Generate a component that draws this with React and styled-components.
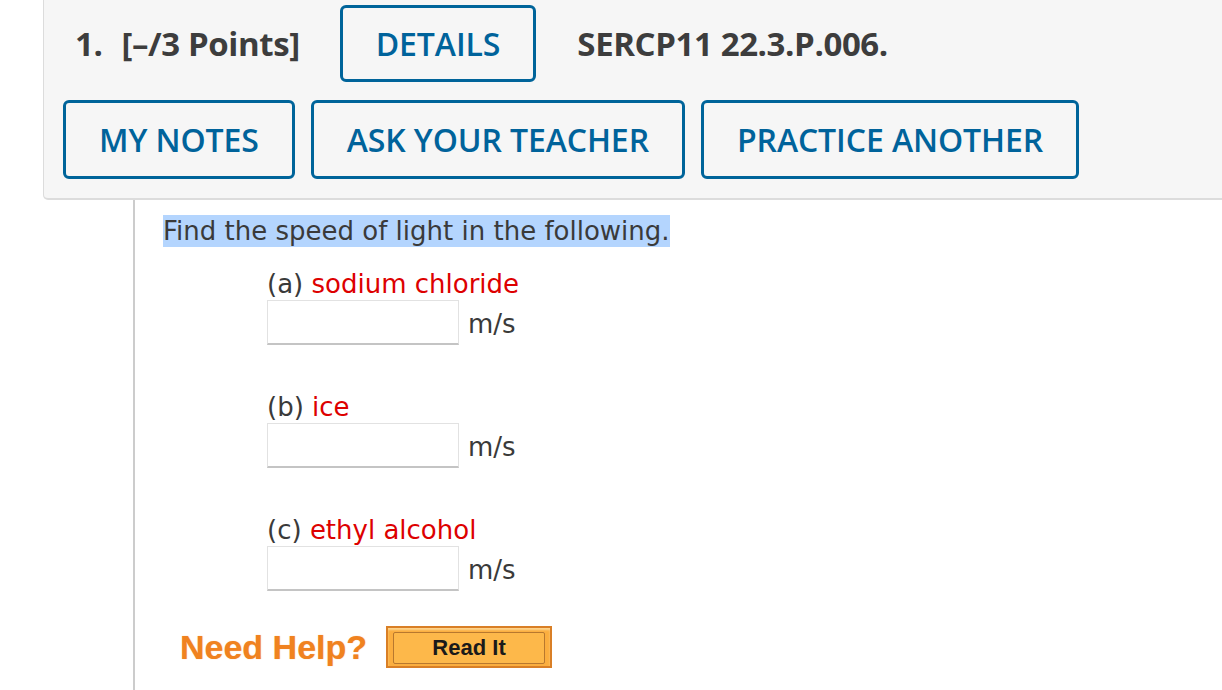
import React from 'react';
import styled, { createGlobalStyle } from 'styled-components';

const GlobalStyle = createGlobalStyle`
    html, body {
        margin: 0;
        padding: 0;
        background: #ffffff;
        overflow: hidden;
    }
    body {
        font-family: "DejaVu Sans", Verdana, sans-serif;
        color: #333;
    }
`

const Page = styled.div`
    width: 1222px;
    height: 690px;
    overflow: hidden;
`

const Panel = styled.div`
    margin-left: 43px;
    width: 1200px;
    background: #f6f6f6;
    border: 1px solid #dcdcdc;
    border-top: none;
    border-bottom-width: 2px;
    border-radius: 0 0 0 5px;
    padding: 5px 0 19px 19px;
    font-family: "Open Sans", "Liberation Sans", sans-serif;
`

const TitleRow = styled.div`
    display: flex;
    align-items: center;
    padding-left: 12px;
    height: 77px;
    color: #3d3d3d;
    font-size: 33px;
    font-weight: 700;
    letter-spacing: -0.4px;

    &>span:first-child {
        margin-right: 19px;
    }
`

const Points = styled.span`
    margin-right: 40px;
`

const Code = styled.span`
    margin-left: 41px;
`

const ButtonRow = styled.div`
    display: flex;
    gap: 16px;
    margin-top: 18px;
`

const OutlineButton = styled.button`
    box-sizing: border-box;
    height: ${props => props.$h || 79}px;
    padding: 0 ${props => props.$px || 33}px;
    border: 3px solid #00649a;
    border-radius: 6px;
    background: transparent;
    color: #00639b;
    font-family: "Open Sans", "Liberation Sans", sans-serif;
    font-size: 32px;
    font-weight: 600;
    letter-spacing: -0.1px;
    cursor: pointer;
`

const Content = styled.div`
    margin-left: 133px;
    border-left: 2px solid #cccccc;
    padding: 15px 0 40px 28px;
    font-size: 26px;
`

const Question = styled.span`
    display: inline-block;
    line-height: 32px;
    background: #b4d5fe;
    color: #3a3a3a;
`

const Parts = styled.div`
    margin-left: 104px;
    margin-top: 22px;
    display: flex;
    flex-direction: column;
    gap: 47px;
`

const Part = styled.div`
    display: flex;
    flex-direction: column;
`

const Label = styled.div`
    line-height: 30px;
    color: #3a3a3a;

    &>em {
        font-style: normal;
        color: #dd0000;
    }
`

const AnswerRow = styled.div`
    display: flex;
    align-items: center;
    margin-top: 1px;
`

const Input = styled.input`
    box-sizing: border-box;
    width: 192px;
    height: 45px;
    border: 1px solid #e2e2e2;
    border-bottom: 2px solid #c4c4c4;
    background: #ffffff;
    outline: none;
`

const Unit = styled.span`
    margin-left: 9px;
    margin-top: 3px;
    color: #3a3a3a;
`

const HelpRow = styled.div`
    display: flex;
    align-items: center;
    gap: 19px;
    margin-left: 17px;
    margin-top: 35px;
`

const NeedHelp = styled.span`
    font-family: "Liberation Sans", Arial, sans-serif;
    font-weight: 700;
    font-size: 34px;
    color: #f0821f;
    text-shadow: 0 0 1px rgba(240, 130, 31, 0.6);
`

const ReadIt = styled.button`
    box-sizing: border-box;
    width: 166px;
    height: 42px;
    padding: 4px 5px;
    border: 2px solid #d97f26;
    background: #fbae3f;
    box-shadow: inset 0 2px 2px #fdd48e;
    cursor: pointer;

    &>span {
        display: flex;
        align-items: center;
        justify-content: center;
        height: 100%;
        border: 1px solid #b8782e;
        border-radius: 2px;
        background: #fdb84a;
        font-family: "Liberation Sans", Arial, sans-serif;
        font-weight: 700;
        font-size: 22px;
        color: #1a1a1a;
    }
`

const parts = [
    { key: 'a', name: 'sodium chloride' },
    { key: 'b', name: 'ice' },
    { key: 'c', name: 'ethyl alcohol' },
]

function App() {
  return (
    <Page>
        <GlobalStyle />
        <Panel>
            <TitleRow>
                <span>1.</span>
                <Points>[–/3 Points]</Points>
                <OutlineButton $h={77}>DETAILS</OutlineButton>
                <Code>SERCP11 22.3.P.006.</Code>
            </TitleRow>
            <ButtonRow>
                <OutlineButton>MY NOTES</OutlineButton>
                <OutlineButton>ASK YOUR TEACHER</OutlineButton>
                <OutlineButton>PRACTICE ANOTHER</OutlineButton>
            </ButtonRow>
        </Panel>

        <Content>
            <Question>Find the speed of light in the following.</Question>
            <Parts>
                {parts.map(p => (
                    <Part key={p.key}>
                        <Label>({p.key}) <em>{p.name}</em></Label>
                        <AnswerRow>
                            <Input type="text" />
                            <Unit>m/s</Unit>
                        </AnswerRow>
                    </Part>
                ))}
            </Parts>
            <HelpRow>
                <NeedHelp>Need Help?</NeedHelp>
                <ReadIt><span>Read It</span></ReadIt>
            </HelpRow>
        </Content>
    </Page>
  )
}

export default App;
